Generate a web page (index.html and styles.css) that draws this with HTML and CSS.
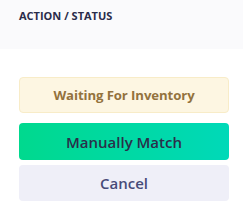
FILE: index.html
```html
<!DOCTYPE html>
<html>
<head>
<meta charset="utf-8">
<link rel="stylesheet" href="styles.css">
</head>
<body>
<div class="header">
  <span class="title">ACTION / STATUS</span>
</div>
<div class="actions">
  <div class="status">Waiting For Inventory</div>
  <button class="btn btn-match">Manually Match</button>
  <button class="btn btn-cancel">Cancel</button>
</div>
</body>
</html>
```
FILE: styles.css
```css
html, body {
  margin: 0;
  padding: 0;
  background: #ffffff;
  font-family: "Open Sans", "Noto Sans", sans-serif;
}
.header {
  height: 49px;
  background: #fafafc;
  padding: 8px 19px 0;
  box-sizing: border-box;
}
.title {
  font-size: 11px;
  font-weight: 700;
  color: #2a2c4a;
  line-height: 16px;
  display: block;
}
.actions {
  padding: 28px 14px 0 19px;
  display: flex;
  flex-direction: column;
}
.status {
  height: 36px;
  box-sizing: border-box;
  border: 1px solid #f8ecc8;
  background: #fdf6e2;
  border-radius: 4px;
  color: #93723d;
  font-size: 13.2px;
  font-weight: 700;
  letter-spacing: -0.1px;
  display: flex;
  align-items: center;
  justify-content: center;
}
.btn {
  border: none;
  border-radius: 4px;
  font-family: inherit;
  font-weight: 600;
  display: flex;
  align-items: center;
  justify-content: center;
  padding: 0;
}
.btn-match {
  margin-top: 10px;
  height: 37px;
  background: linear-gradient(90deg, #00d98e, #00d9b8);
  color: #2b2e4a;
  font-size: 15px;
}
.btn-cancel {
  margin-top: 5px;
  height: 36px;
  background: #efeff8;
  color: #474b78;
  font-size: 15px;
}
```
